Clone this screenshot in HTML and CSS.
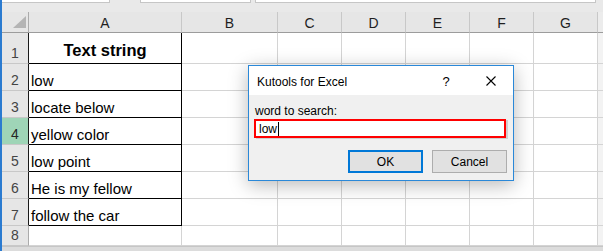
FILE: index.html
```html
<!DOCTYPE html>
<html>
<head>
<meta charset="utf-8">
<link rel="stylesheet" href="styles.css">
</head>
<body>
<div class="app">
  <div class="topbar">
    <div class="box b1"></div>
    <div class="box b2"></div>
    <div class="box b3"></div>
  </div>
  <div class="sheet">
    <div class="corner"><svg width="27" height="21" viewBox="0 0 27 21"><polygon points="11,16 24,16 24,4" fill="#b4b4b4"/></svg></div>
    <div class="ch">A</div><div class="ch">B</div><div class="ch">C</div><div class="ch">D</div><div class="ch">E</div><div class="ch">F</div><div class="ch">G</div><div class="ch end"></div>

    <div class="rh dark">1</div><div class="cell a b title">Text string</div><div class="cell"></div><div class="cell"></div><div class="cell"></div><div class="cell"></div><div class="cell"></div><div class="cell"></div><div class="cell end"></div>
    <div class="rh dark">2</div><div class="cell a b">low</div><div class="cell"></div><div class="cell"></div><div class="cell"></div><div class="cell"></div><div class="cell"></div><div class="cell"></div><div class="cell end"></div>
    <div class="rh dark">3</div><div class="cell a b">locate below</div><div class="cell"></div><div class="cell"></div><div class="cell"></div><div class="cell"></div><div class="cell"></div><div class="cell"></div><div class="cell end"></div>
    <div class="rh dark sel">4</div><div class="cell a b">yellow color</div><div class="cell"></div><div class="cell"></div><div class="cell"></div><div class="cell"></div><div class="cell"></div><div class="cell"></div><div class="cell end"></div>
    <div class="rh dark">5</div><div class="cell a b">low point</div><div class="cell"></div><div class="cell"></div><div class="cell"></div><div class="cell"></div><div class="cell"></div><div class="cell"></div><div class="cell end"></div>
    <div class="rh dark">6</div><div class="cell a b">He is my fellow</div><div class="cell"></div><div class="cell"></div><div class="cell"></div><div class="cell"></div><div class="cell"></div><div class="cell"></div><div class="cell end"></div>
    <div class="rh dark">7</div><div class="cell a b">follow the car</div><div class="cell"></div><div class="cell"></div><div class="cell"></div><div class="cell"></div><div class="cell"></div><div class="cell"></div><div class="cell end"></div>
    <div class="rh">8</div><div class="cell a"></div><div class="cell"></div><div class="cell"></div><div class="cell"></div><div class="cell"></div><div class="cell"></div><div class="cell"></div><div class="cell end"></div>
  </div>
  <div class="bottom"></div>

  <div class="dialog">
    <div class="dtitle">
      <span class="dname">Kutools for Excel</span>
      <span class="help">?</span>
      <span class="close"><svg width="10" height="10" viewBox="0 0 10 10"><path d="M0.5 0.5 L9.5 9.5 M9.5 0.5 L0.5 9.5" stroke="#000" stroke-width="1.1" fill="none"/></svg></span>
    </div>
    <div class="dbody">
      <div class="label">word to search:</div>
      <div class="input"><span class="val">low</span><span class="caret"></span></div>
      <div class="buttons">
        <div class="btn ok">OK</div>
        <div class="btn">Cancel</div>
      </div>
    </div>
  </div>
</div>
</body>
</html>
```
FILE: styles.css
```css
html, body {
  margin: 0;
  padding: 0;
  background: #ffffff;
}
.app {
  position: relative;
  width: 603px;
  height: 251px;
  box-sizing: border-box;
  border-left: 2px solid #2b7bd0;
  overflow: hidden;
  background: #ffffff;
  font-family: "Liberation Sans", Arial, sans-serif;
}
.topbar {
  height: 12px;
  background: #e9e9e9;
  display: flex;
  align-items: flex-start;
}
.box {
  height: 2px;
  background: #ffffff;
  border-bottom: 1px solid #c6c6c6;
  border-right: 1px solid #c6c6c6;
  box-sizing: content-box;
}
.b1 { width: 107px; }
.b2 { width: 109px; margin-left: 30px; border-left: 1px solid #c6c6c6; }
.b3 { width: 339px; margin-left: 4px; border-left: 1px solid #c6c6c6; }

.sheet {
  display: grid;
  grid-template-columns: 27px 153px 96px 64px 64px 64px 64px 64px 1fr;
  grid-template-rows: 21px 31px 27px 27px 27px 27px 27px 27px 20px;
}
.sheet > div {
  box-sizing: border-box;
}
.corner {
  background: #e6e6e6;
  border-right: 1px solid #ababab;
  border-bottom: 1px solid #9c9c9c;
  line-height: 0;
}
.ch {
  background: #e6e6e6;
  border-right: 1px solid #c8c8c8;
  border-bottom: 1px solid #9c9c9c;
  display: flex;
  align-items: center;
  justify-content: center;
  font-size: 14px;
  color: #1f1f1f;
  padding-top: 1px;
}
.ch.end {
  border-right: none;
  background: #ececec;
}
.rh {
  background: #e6e6e6;
  border-right: 1px solid #ababab;
  border-bottom: 1px solid #c8c8c8;
  display: flex;
  align-items: flex-end;
  justify-content: center;
  padding-bottom: 2px;
  font-size: 14px;
  color: #444444;
}
.rh.dark {
  border-right-color: #1a1a1a;
}
.rh.sel {
  background: #9fd5b7;
  color: #262626;
}
.cell {
  border-right: 1px solid #d4d4d4;
  border-bottom: 1px solid #d4d4d4;
  display: flex;
  align-items: flex-end;
  padding: 0 0 1px 2px;
  font-size: 15px;
  color: #000000;
  white-space: nowrap;
}
.cell.b {
  border-right-color: #000000;
  border-bottom-color: #000000;
}
.cell.title {
  justify-content: center;
  font-weight: bold;
  font-size: 16.5px;
  padding: 0 0 3px 0;
}
.cell.end {
  border-right: none;
  background: #f3f3f3;
}
.bottom {
  height: 5px;
  border-top: 1px solid #c6c6c6;
  background: #dcdcdc;
}

.dialog {
  position: absolute;
  left: 246px;
  top: 65px;
  width: 266px;
  height: 116px;
  box-sizing: border-box;
  border: 1px solid #2a88d8;
  background: #f0f0f0;
  box-shadow: 0 4px 18px rgba(0, 0, 0, 0.28);
  font-family: "Liberation Sans", Arial, sans-serif;
  font-size: 12px;
  color: #000;
}
.dtitle {
  height: 29px;
  background: #ffffff;
  display: flex;
  align-items: center;
  padding-left: 8px;
}
.dname {
  flex: 1;
  font-size: 12px;
  padding-top: 2px;
}
.help {
  width: 30px;
  text-align: center;
  font-size: 13px;
  margin-right: 15px;
  padding-top: 1px;
}
.close {
  width: 30px;
  margin-right: 7px;
  display: flex;
  justify-content: center;
  line-height: 0;
}
.dbody {
  padding: 8px 6px 0 5px;
}
.label {
  line-height: 15px;
  margin-left: 1px;
  padding-top: 1px;
  margin-bottom: -1px;
}
.input {
  margin-top: 1px;
  width: 252px;
  height: 19px;
  box-sizing: border-box;
  border: 2px solid #ff0000;
  background: #ffffff;
  box-shadow: 2px 1px 0 #cfcfcf;
  display: flex;
  align-items: center;
  padding-left: 3px;
}
.val {
  line-height: 14px;
}
.caret {
  width: 1px;
  height: 14px;
  background: #000;
  margin-left: 1px;
}
.buttons {
  margin-top: 12px;
  display: flex;
  justify-content: flex-end;
  gap: 9px;
}
.btn {
  width: 75px;
  height: 23px;
  box-sizing: border-box;
  border: 1px solid #adadad;
  background: #e1e1e1;
  display: flex;
  align-items: center;
  justify-content: center;
}
.btn.ok {
  border: 2px solid #0078d7;
}
```
